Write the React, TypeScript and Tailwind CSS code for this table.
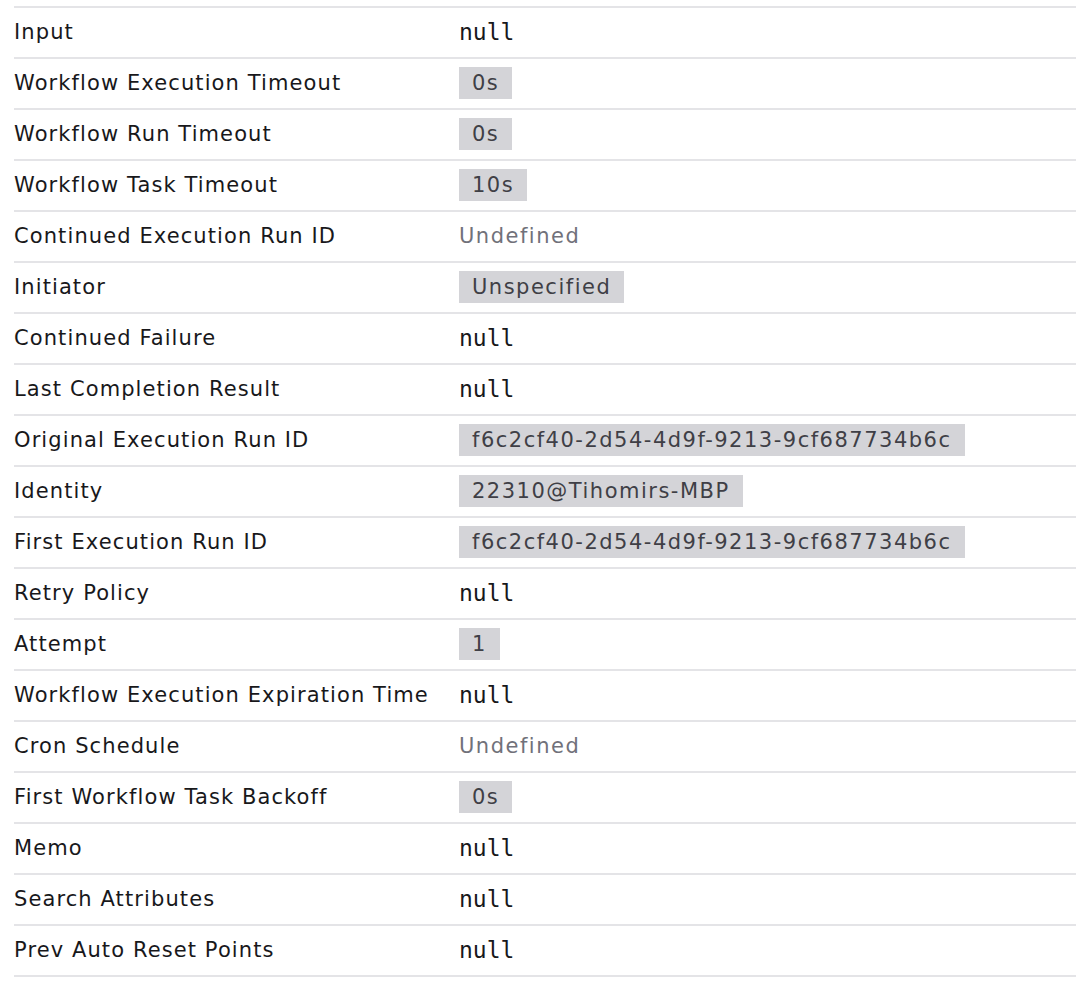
type Value =
  | { kind: "null" }
  | { kind: "undefined" }
  | { kind: "badge"; text: string };

interface Row {
  label: string;
  value: Value;
}

const NULL: Value = { kind: "null" };
const UNDEF: Value = { kind: "undefined" };
const badge = (text: string): Value => ({ kind: "badge", text });

const RUN_ID = "f6c2cf40-2d54-4d9f-9213-9cf687734b6c";

const rows: Row[] = [
  { label: "Input", value: NULL },
  { label: "Workflow Execution Timeout", value: badge("0s") },
  { label: "Workflow Run Timeout", value: badge("0s") },
  { label: "Workflow Task Timeout", value: badge("10s") },
  { label: "Continued Execution Run ID", value: UNDEF },
  { label: "Initiator", value: badge("Unspecified") },
  { label: "Continued Failure", value: NULL },
  { label: "Last Completion Result", value: NULL },
  { label: "Original Execution Run ID", value: badge(RUN_ID) },
  { label: "Identity", value: badge("22310@Tihomirs-MBP") },
  { label: "First Execution Run ID", value: badge(RUN_ID) },
  { label: "Retry Policy", value: NULL },
  { label: "Attempt", value: badge("1") },
  { label: "Workflow Execution Expiration Time", value: NULL },
  { label: "Cron Schedule", value: UNDEF },
  { label: "First Workflow Task Backoff", value: badge("0s") },
  { label: "Memo", value: NULL },
  { label: "Search Attributes", value: NULL },
  { label: "Prev Auto Reset Points", value: NULL },
];

function ValueCell({ value }: { value: Value }) {
  if (value.kind === "null") {
    return (
      <span className="font-['DejaVu_Sans_Mono',monospace] text-[23px] tracking-normal text-[#18181b]">
        null
      </span>
    );
  }
  if (value.kind === "undefined") {
    return <span className="tracking-[1.5px] text-[#71717a]">Undefined</span>;
  }
  return (
    <span className="inline-block bg-[#d4d4d8] px-[13px] h-8 leading-8 tracking-[1.5px] text-[#3f3f46]">
      {value.text}
    </span>
  );
}

export default function App() {
  return (
    <div className="bg-white min-h-[982px] pt-[6px] pl-[14px] font-['DejaVu_Sans',sans-serif] text-[21px]">
      <div className="border-t-2 border-[#e4e4e7]">
        {rows.map((row) => (
          <div
            key={row.label}
            className="flex items-center h-[51px] border-b-2 border-[#e4e4e7]"
          >
            <div className="w-[445px] shrink-0 tracking-[1.1px] text-[#18181b]">
              {row.label}
            </div>
            <div className="flex-1">
              <ValueCell value={row.value} />
            </div>
          </div>
        ))}
      </div>
    </div>
  );
}
